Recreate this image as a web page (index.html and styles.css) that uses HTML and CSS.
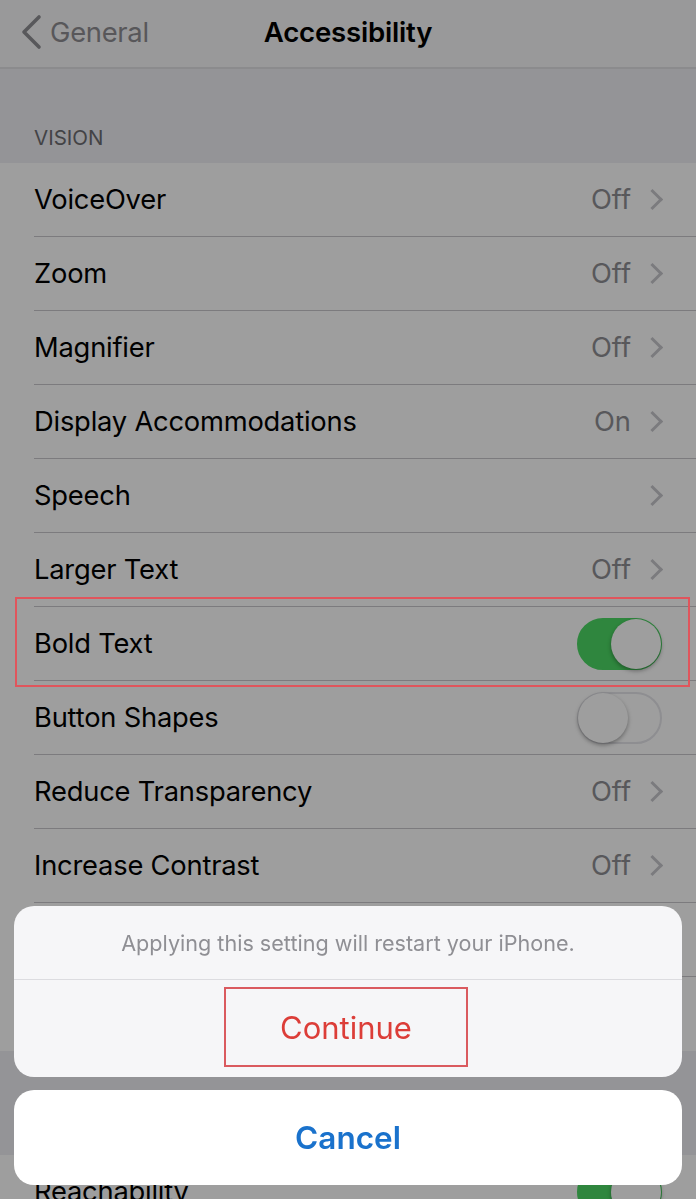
FILE: index.html
```html
<!DOCTYPE html>
<html lang="en">
<head>
    <meta charset="UTF-8">
    <meta name="viewport" content="width=device-width, initial-scale=1.0">
    <title>Accessibility</title>
    <link rel="stylesheet" href="styles.css">
</head>
<body>
    <div class="navbar">
        <div class="back">
            <svg class="back-chevron" viewBox="0 0 22 36" width="22" height="36">
                <path d="M19 3 L4 18 L19 33" fill="none" stroke="#8e8e93" stroke-width="3.6" stroke-linecap="round" stroke-linejoin="round"/>
            </svg>
            <span>General</span>
        </div>
        <div class="title">Accessibility</div>
    </div>

    <div class="group-header">VISION</div>
    <div class="group">
        <div class="row"><div class="row-inner"><span class="label">VoiceOver</span><span class="value">Off</span><span class="chev"></span></div></div>
        <div class="row"><div class="row-inner"><span class="label">Zoom</span><span class="value">Off</span><span class="chev"></span></div></div>
        <div class="row"><div class="row-inner"><span class="label">Magnifier</span><span class="value">Off</span><span class="chev"></span></div></div>
        <div class="row"><div class="row-inner"><span class="label">Display Accommodations</span><span class="value">On</span><span class="chev"></span></div></div>
        <div class="row"><div class="row-inner"><span class="label">Speech</span><span class="chev"></span></div></div>
        <div class="row"><div class="row-inner"><span class="label">Larger Text</span><span class="value">Off</span><span class="chev"></span></div></div>
        <div class="row marked"><div class="row-inner"><span class="label">Bold Text</span><span class="switch on"></span></div></div>
        <div class="row"><div class="row-inner"><span class="label">Button Shapes</span><span class="switch"></span></div></div>
        <div class="row"><div class="row-inner"><span class="label">Reduce Transparency</span><span class="value">Off</span><span class="chev"></span></div></div>
        <div class="row"><div class="row-inner"><span class="label">Increase Contrast</span><span class="value">Off</span><span class="chev"></span></div></div>
        <div class="row"><div class="row-inner"><span class="label">Reduce Motion</span><span class="value">Off</span><span class="chev"></span></div></div>
        <div class="row"><div class="row-inner last"><span class="label">On/Off Labels</span><span class="switch"></span></div></div>
    </div>

    <div class="group-gap"></div>
    <div class="group">
        <div class="row"><div class="row-inner"><span class="label">Reachability</span><span class="switch on"></span></div></div>
        <div class="row"><div class="row-inner"><span class="label">Vibration</span><span class="value">On</span><span class="chev"></span></div></div>
    </div>

    <div class="dim"></div>

    <div class="sheet">
        <div class="sheet-card">
            <div class="sheet-message">Applying this setting will restart your iPhone.</div>
            <div class="sheet-action destructive"><span class="marked-action">Continue</span></div>
        </div>
        <div class="sheet-card cancel">
            <div class="sheet-action">Cancel</div>
        </div>
    </div>
</body>
</html>
```

FILE: styles.css
```css
body {
    margin: 0;
    font-family: Inter, "Noto Sans", sans-serif;
    background-color: #efeff4;
    color: #000;
    overflow: hidden;
    height: 1199px;
}
.navbar {
    height: 67px;
    background-color: #f7f7f8;
    border-bottom: 2px solid #e0e0e4;
    display: flex;
    align-items: center;
    justify-content: center;
    position: relative;
}
.back {
    position: absolute;
    left: 20px;
    top: 14px;
    display: flex;
    align-items: center;
    gap: 8px;
    color: #8e8d92;
    font-size: 27.4px;
    letter-spacing: -0.3px;
}
.back-chevron {
    display: block;
}
.title {
    font-size: 27.6px;
    font-weight: 600;
    letter-spacing: -0.2px;
    margin-bottom: 4px;
}
.group-header {
    height: 94px;
    box-sizing: border-box;
    padding: 56px 0 0 34px;
    font-size: 20.5px;
    color: #6d6d72;
}
.group {
    background-color: #fff;
}
.group-gap {
    height: 104px;
}
.row {
    padding-left: 34px;
    position: relative;
}
.row-inner {
    height: 73px;
    border-bottom: 1px solid #c8c7cc;
    display: flex;
    align-items: center;
    padding-right: 34px;
}
.row-inner.last {
    border-bottom: none;
    height: 74px;
}
.label {
    flex: 1;
    font-size: 27.3px;
    letter-spacing: -0.2px;
}
.value {
    font-size: 27.3px;
    color: #8e8e93;
    margin-right: 14px;
}
.chev {
    width: 12px;
    height: 12px;
    border-top: 3px solid #c7c7cc;
    border-right: 3px solid #c7c7cc;
    transform: rotate(45deg);
    margin-right: 2px;
}
.switch {
    width: 85px;
    height: 52px;
    box-sizing: border-box;
    border-radius: 26px;
    border: 2px solid #e5e5ea;
    background-color: #fff;
    position: relative;
}
.switch::after {
    content: "";
    position: absolute;
    top: -1px;
    left: -1px;
    width: 50px;
    height: 50px;
    box-sizing: border-box;
    border-radius: 50%;
    background-color: #fff;
    box-shadow: 0 2px 4px rgba(0,0,0,0.35);
}
.switch.on {
    background-color: #4cd964;
    border-color: #4cd964;
}
.switch.on::after {
    left: auto;
    right: -1px;
}
.marked::before {
    content: "";
    position: absolute;
    left: 15px;
    right: 6px;
    top: -10px;
    bottom: -6px;
    border: 2px solid #e0555c;
    z-index: 3;
}
.dim {
    position: fixed;
    left: 0;
    top: 0;
    width: 100%;
    height: 100%;
    background-color: rgba(0,0,0,0.38);
    z-index: 1;
}
.sheet {
    position: fixed;
    left: 14px;
    right: 14px;
    bottom: 14px;
    z-index: 2;
    display: flex;
    flex-direction: column;
    gap: 13px;
}
.sheet-card {
    background-color: #f6f6f8;
    border-radius: 20px;
    overflow: hidden;
}
.sheet-card.cancel {
    background-color: #fff;
}
.sheet-message {
    height: 73px;
    border-bottom: 1px solid #dcdce0;
    display: flex;
    align-items: center;
    justify-content: center;
    font-size: 21.6px;
    color: #8f8f94;
}
.sheet-action {
    height: 95px;
    display: flex;
    align-items: center;
    justify-content: center;
    font-size: 31.5px;
    font-weight: 600;
    color: #1a72cc;
}
.sheet-action.destructive {
    height: 97px;
    font-size: 31px;
    font-weight: 400;
    color: #dc3d38;
}
.marked-action {
    width: 244px;
    height: 80px;
    box-sizing: border-box;
    border: 2px solid #da5a5f;
    display: flex;
    align-items: center;
    justify-content: center;
    margin-left: -4px;
    margin-top: -3px;
}
```
